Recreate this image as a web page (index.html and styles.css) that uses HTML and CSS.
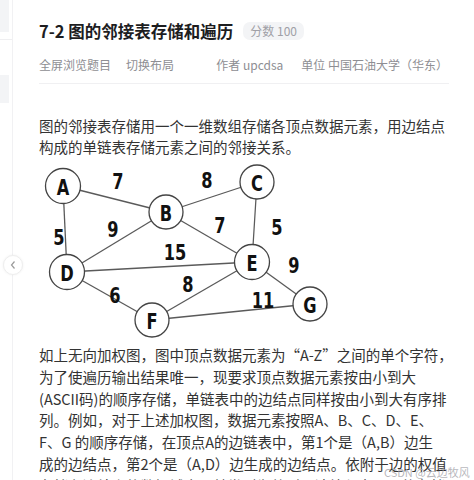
FILE: index.html
```html
<!DOCTYPE html>
<html lang="zh">
<head>
<meta charset="utf-8">
<title>7-2 图的邻接表存储和遍历</title>
<link rel="stylesheet" href="styles.css">
</head>
<body>
<div class="page">
  <aside class="sidebar">
    <div class="sb-block"></div>
    <div class="sb-sep"></div>
    <div class="sb-block sb-block2"></div>
  </aside>
  <button class="collapse" aria-label="收起">
    <svg width="8" height="10" viewBox="0 0 8 10"><path d="M5.5 1.5 L2.5 5 L5.5 8.5" fill="none" stroke="#9a9a9a" stroke-width="1.2"/></svg>
  </button>
  <main class="main">
    <div class="title-row">
      <h1 class="title">7-2 图的邻接表存储和遍历</h1>
      <span class="badge">分数 100</span>
    </div>
    <div class="meta">
      <div class="meta-group">
        <span>全屏浏览题目</span>
        <span>切换布局</span>
      </div>
      <div class="meta-group meta-right">
        <span>作者 upcdsa</span>
        <span>单位 中国石油大学（华东）</span>
      </div>
    </div>
    <p class="para">图的邻接表存储用一个一维数组存储各顶点数据元素，用边结点构成的单链表存储元素之间的邻接关系。</p>
    <svg class="graph" width="320" height="180" viewBox="0 0 320 180">
      <g class="edges">
        <line x1="24" y1="26" x2="127" y2="52"/>
        <line x1="24" y1="26" x2="28" y2="112"/>
        <line x1="127" y1="52" x2="218" y2="22"/>
        <line x1="127" y1="52" x2="28" y2="112"/>
        <line x1="127" y1="52" x2="213" y2="102"/>
        <line x1="218" y1="22" x2="213" y2="102"/>
        <line x1="28" y1="112" x2="213" y2="102"/>
        <line x1="28" y1="112" x2="113" y2="160"/>
        <line x1="213" y1="102" x2="113" y2="160"/>
        <line x1="213" y1="102" x2="271" y2="144"/>
        <line x1="113" y1="160" x2="271" y2="144"/>
      </g>
      <g class="nodes">
        <circle cx="24" cy="26" r="17.5"/>
        <circle cx="127" cy="52" r="17"/>
        <circle cx="218" cy="22" r="17"/>
        <circle cx="28" cy="112" r="17.5"/>
        <circle cx="213" cy="102" r="17.5"/>
        <circle cx="113" cy="160" r="17"/>
        <circle cx="271" cy="144" r="17"/>
      </g>
      <g class="labels" transform="scale(0.82 1)">
        <text x="29.3" y="27">A</text>
        <text x="154.9" y="53">B</text>
        <text x="265.9" y="23">C</text>
        <text x="34.2" y="113">D</text>
        <text x="259.8" y="103">E</text>
        <text x="137.8" y="161">F</text>
        <text x="330.5" y="145">G</text>
        <text x="96.3" y="21">7</text>
        <text x="204.9" y="20">8</text>
        <text x="90.2" y="69">9</text>
        <text x="220.7" y="65">7</text>
        <text x="24.4" y="77">5</text>
        <text x="165.9" y="92">15</text>
        <text x="290.2" y="67">5</text>
        <text x="311" y="105">9</text>
        <text x="181.7" y="124">8</text>
        <text x="92.7" y="135">6</text>
        <text x="273.2" y="140">11</text>
      </g>
    </svg>
    <p class="para para2">如上无向加权图，图中顶点数据元素为“A-Z”之间的单个字符，<br>为了使遍历输出结果唯一，现要求顶点数据元素按由小到大<br>(ASCII码)的顺序存储，单链表中的边结点同样按由小到大有序排<br>列。例如，对于上述加权图，数据元素按照A、B、C、D、E、<br>F、G 的顺序存储，在顶点A的边链表中，第1个是（A,B）边生<br>成的边结点，第2个是（A,D）边生成的边结点。依附于边的权值<br>存储在边结点的数据域中，其类型为整型，请编程实现图的存储。</p>
  </main>
  <div class="watermark">CSDN @云边牧风</div>
</div>
</body>
</html>
```

FILE: styles.css
```css
html, body {
  margin: 0;
  padding: 0;
  background: #ffffff;
}

body {
  font-family: "Noto Sans CJK SC", "Noto Sans", sans-serif;
  color: #333333;
}

.page {
  position: relative;
  display: flex;
  width: 474px;
  height: 480px;
  overflow: hidden;
}

.sidebar {
  flex: 0 0 12px;
  border-right: 1px solid #f1f1f3;
}

.sb-block {
  width: 9px;
  height: 32px;
  background: #f3f4f6;
}

.sb-sep {
  margin-top: 7px;
  height: 1px;
  background: #efeff1;
}

.sb-block2 {
  margin-top: 35px;
  height: 28px;
}

.collapse {
  position: absolute;
  left: 3px;
  top: 255px;
  width: 20px;
  height: 20px;
  padding: 0;
  border: 1px solid #eeeeee;
  border-radius: 50%;
  background: #ffffff;
  box-shadow: 0 0 3px rgba(0, 0, 0, 0.06);
  display: flex;
  align-items: center;
  justify-content: center;
}

.main {
  flex: 1;
  padding: 20px 25px 0 26px;
  min-width: 0;
}

.title-row {
  display: flex;
  align-items: center;
  height: 22px;
}

.title {
  margin: 0;
  font-size: 16.5px;
  line-height: 22px;
  font-weight: 600;
  color: #1d1d1f;
}

.badge {
  margin-left: 10px;
  height: 18px;
  padding: 0 7px;
  border-radius: 7px;
  background: #f3f4f6;
  color: #a0a0a6;
  font-size: 12px;
  line-height: 18px;
}

.meta {
  margin-top: 14px;
  display: flex;
  justify-content: space-between;
  font-size: 12px;
  line-height: 18px;
  color: #8e8e93;
  padding-bottom: 9px;
  border-bottom: 1px solid #f0f0f2;
}

.meta-group {
  display: flex;
  gap: 15px;
}

.meta-right {
  gap: 18px;
  margin-right: 1px;
}

.para {
  margin: 30.5px 0 0;
  font-size: 14.5px;
  line-height: 21px;
  color: #333333;
}

.graph {
  display: block;
  margin-top: 3.5px;
}

.edges line {
  stroke: #5a5a5a;
  stroke-width: 1.3;
}

.nodes circle {
  fill: #ffffff;
  stroke: #444444;
  stroke-width: 1.3;
}

.labels text {
  font-family: "DejaVu Sans Condensed", "DejaVu Sans", sans-serif;
  font-size: 22px;
  font-weight: bold;
  fill: #111111;
  text-anchor: middle;
  dominant-baseline: central;
}

.para2 {
  margin-top: 4px;
  line-height: 21.8px;
  white-space: nowrap;
}

.watermark {
  position: absolute;
  left: 384px;
  top: 464px;
  font-size: 11px;
  color: rgba(170, 170, 175, 0.85);
  white-space: nowrap;
}
```
